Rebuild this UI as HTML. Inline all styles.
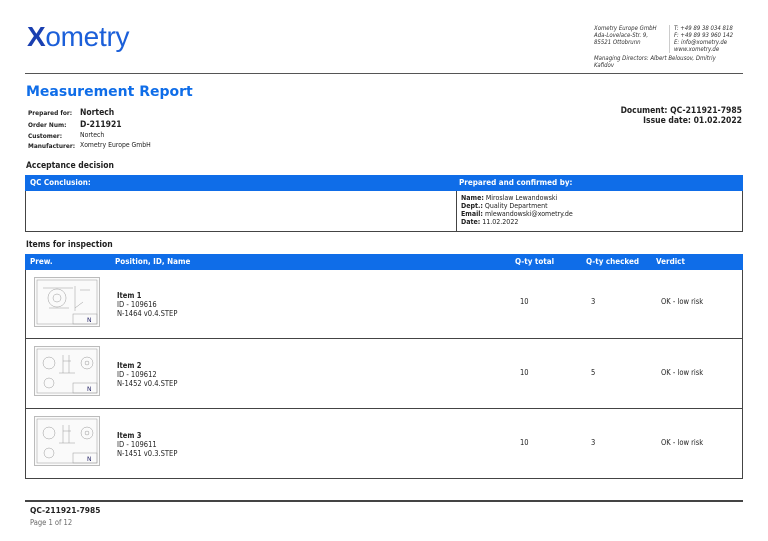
<!DOCTYPE html>
<html><head><meta charset="utf-8"><style>
*{margin:0;padding:0;box-sizing:border-box}
body{width:768px;height:541px;background:#fff;position:relative;overflow:hidden;font-family:"DejaVu Sans Condensed","DejaVu Sans",sans-serif;color:#222}
.a{position:absolute;white-space:nowrap}
.hd{font-size:6px;font-style:italic;line-height:7px;color:#333}
.lbl{font-size:6.5px;font-weight:bold}
.bar{position:absolute;left:25px;width:718px;background:#0f6de8;color:#fff;font-size:8px;font-weight:bold}
.th{position:absolute;top:3px}
.sm{font-size:7.5px;line-height:9px}
.row{position:absolute;left:25px;width:718px;border-left:1px solid #444;border-right:1px solid #444;border-bottom:1.5px solid #444}
.thumb{position:absolute;left:8px;top:7px;width:66px;height:50px;border:1px solid #bbb;background:#fafafa}
</style></head><body>
<div class="a" style="left:27px;top:21px;font-size:28px;color:#1b5fd9;letter-spacing:-0.3px;font-family:'Liberation Sans',sans-serif"><span style="color:#1a3fb0;font-weight:bold">X</span>ometry</div>

<div class="a hd" style="left:594px;top:25px">Xometry Europe GmbH<br>Ada-Lovelace-Str. 9,<br>85521 Ottobrunn</div>
<div class="a" style="left:669px;top:25px;width:1px;height:28px;background:#ccc"></div>
<div class="a hd" style="left:674px;top:25px">T: +49 89 38 034 818<br>F: +49 89 93 960 142<br>E: info@xometry.de<br>www.xometry.de</div>
<div class="a hd" style="left:594px;top:55px">Managing Directors: Albert Belousov, Dmitriy<br>Kafidov</div>
<div class="a" style="left:25px;top:73px;width:718px;height:1px;background:#555"></div>

<div class="a" style="left:26px;top:84px;font-size:14px;font-weight:bold;color:#0f6de8;font-family:'DejaVu Sans',sans-serif">Measurement Report</div>
<div class="a lbl" style="left:28px;top:109px">Prepared for:</div><div class="a" style="left:80px;top:108px;font-size:8.5px;font-weight:bold">Nortech</div>
<div class="a lbl" style="left:28px;top:121px">Order Num:</div><div class="a" style="left:80px;top:120px;font-size:8.5px;font-weight:bold">D-211921</div>
<div class="a lbl" style="left:28px;top:132px">Customer:</div><div class="a" style="left:80px;top:131px;font-size:6.8px">Nortech</div>
<div class="a lbl" style="left:28px;top:142px">Manufacturer:</div><div class="a" style="left:80px;top:141px;font-size:6.8px">Xometry Europe GmbH</div>
<div class="a" style="right:26px;top:106px;font-size:8.5px;font-weight:bold;text-align:right;line-height:10px">Document: QC-211921-7985<br>Issue date: 01.02.2022</div>

<div class="a" style="left:26px;top:161px;font-size:8.5px;font-weight:bold">Acceptance decision</div>
<div class="bar" style="top:175px;height:16px"><span class="th" style="left:5px">QC Conclusion:</span><span class="th" style="left:434px">Prepared and confirmed by:</span></div>
<div class="row" style="top:191px;height:41px"><div class="a" style="left:430px;top:0;width:1px;height:40px;background:#444"></div>
<div class="a" style="left:435px;top:3px;font-size:7px;line-height:8px"><b>Name:</b> Miroslaw Lewandowski<br><b>Dept.:</b> Quality Department<br><b>Email:</b> mlewandowski@xometry.de<br><b>Date:</b> 11.02.2022</div></div>

<div class="a" style="left:26px;top:240px;font-size:8.5px;font-weight:bold">Items for inspection</div>
<div class="bar" style="top:254px;height:16px"><span class="th" style="left:5px">Prew.</span><span class="th" style="left:90px">Position, ID, Name</span><span class="th" style="left:490px">Q-ty total</span><span class="th" style="left:561px">Q-ty checked</span><span class="th" style="left:631px">Verdict</span></div>

<div class="row" style="top:270px;height:69px">
<div class="thumb"><svg width="64" height="48"><g stroke="#999" fill="none" stroke-width=".5"><rect x="2" y="2" width="60" height="44"/><circle cx="22" cy="20" r="9"/><circle cx="22" cy="20" r="4"/><path d="M8 10h30M40 8v25M45 12h10M40 30l8-6M14 30h20"/><rect x="38" y="36" width="24" height="10"/></g><text x="52" y="44" font-size="6" fill="#226" font-family="DejaVu Sans">N</text></svg></div>
<div class="a sm" style="left:91px;top:21px"><b>Item 1</b><br>ID - 109616<br>N-1464 v0.4.STEP</div>
<div class="a sm" style="left:494px;top:27px">10</div><div class="a sm" style="left:565px;top:27px">3</div><div class="a sm" style="left:635px;top:27px">OK - low risk</div></div>

<div class="row" style="top:339px;height:70px">
<div class="thumb"><svg width="64" height="48"><g stroke="#999" fill="none" stroke-width=".5"><rect x="2" y="2" width="60" height="44"/><circle cx="14" cy="16" r="6"/><circle cx="52" cy="16" r="6"/><circle cx="52" cy="16" r="2"/><circle cx="14" cy="36" r="5"/><path d="M28 8v18M34 8v18M28 14h8M24 26h16"/><rect x="38" y="36" width="24" height="10"/></g><text x="52" y="44" font-size="6" fill="#226" font-family="DejaVu Sans">N</text></svg></div>
<div class="a sm" style="left:91px;top:22px"><b>Item 2</b><br>ID - 109612<br>N-1452 v0.4.STEP</div>
<div class="a sm" style="left:494px;top:29px">10</div><div class="a sm" style="left:565px;top:29px">5</div><div class="a sm" style="left:635px;top:29px">OK - low risk</div></div>

<div class="row" style="top:409px;height:70px">
<div class="thumb"><svg width="64" height="48"><g stroke="#999" fill="none" stroke-width=".5"><rect x="2" y="2" width="60" height="44"/><circle cx="14" cy="16" r="6"/><circle cx="52" cy="16" r="6"/><circle cx="52" cy="16" r="2"/><circle cx="14" cy="36" r="5"/><path d="M28 8v18M34 8v18M28 14h8M24 26h16"/><rect x="38" y="36" width="24" height="10"/></g><text x="52" y="44" font-size="6" fill="#226" font-family="DejaVu Sans">N</text></svg></div>
<div class="a sm" style="left:91px;top:22px"><b>Item 3</b><br>ID - 109611<br>N-1451 v0.3.STEP</div>
<div class="a sm" style="left:494px;top:29px">10</div><div class="a sm" style="left:565px;top:29px">3</div><div class="a sm" style="left:635px;top:29px">OK - low risk</div></div>

<div class="a" style="left:25px;top:500px;width:718px;height:1.5px;background:#444"></div>
<div class="a" style="left:30px;top:506px;font-size:7.5px;font-weight:bold;font-family:'DejaVu Sans',sans-serif">QC-211921-7985</div>
<div class="a" style="left:30px;top:518px;font-size:7.5px;color:#666">Page 1 of 12</div>
</body></html>
